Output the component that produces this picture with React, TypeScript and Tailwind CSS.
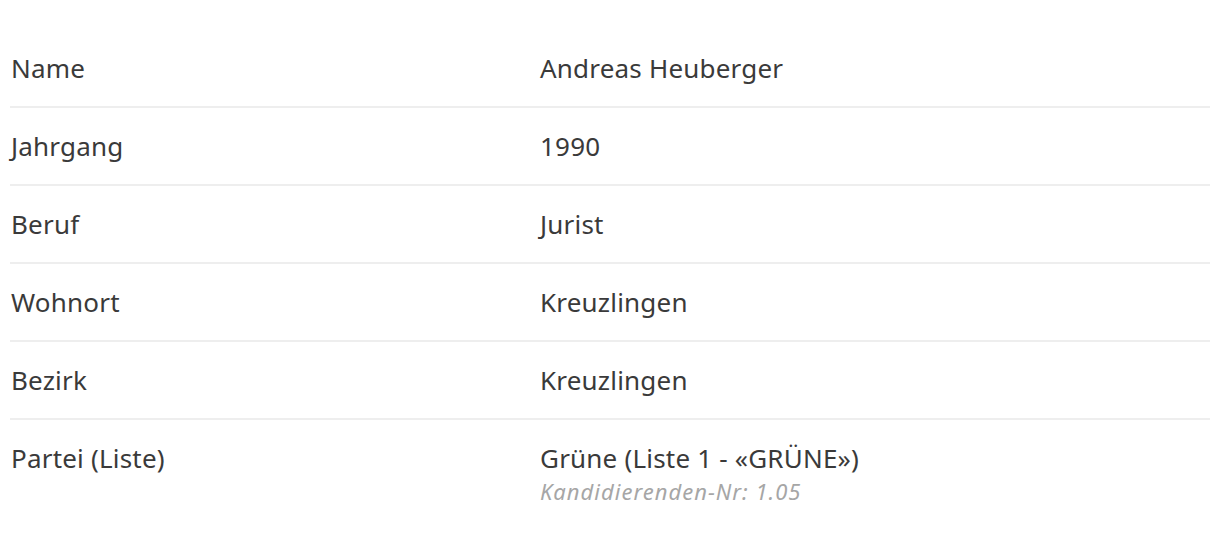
const rows = [
  { label: 'Name', value: 'Andreas Heuberger' },
  { label: 'Jahrgang', value: '1990' },
  { label: 'Beruf', value: 'Jurist' },
  { label: 'Wohnort', value: 'Kreuzlingen' },
  { label: 'Bezirk', value: 'Kreuzlingen' },
];

export default function App() {
  return (
    <div className="min-h-screen bg-white px-[10px] pt-[30px] font-['Noto_Sans',sans-serif] text-[26px] leading-[36px] tracking-[0.2px] text-[#3a3a3a]">
      {rows.map((row) => (
        <div
          key={row.label}
          className="grid grid-cols-[530px_1fr] border-b-2 border-[#eeeeee] py-[20px]"
        >
          <div className="pl-px">{row.label}</div>
          <div>{row.value}</div>
        </div>
      ))}
      <div className="grid grid-cols-[530px_1fr] py-[20px]">
        <div className="pl-px">Partei (Liste)</div>
        <div>
          <div>Grüne (Liste 1 - «GRÜNE»)</div>
          <div className="text-[22px] leading-[30px] italic tracking-[1px] text-[#a6a6a6]">
            Kandidierenden-Nr: 1.05
          </div>
        </div>
      </div>
    </div>
  );
}
